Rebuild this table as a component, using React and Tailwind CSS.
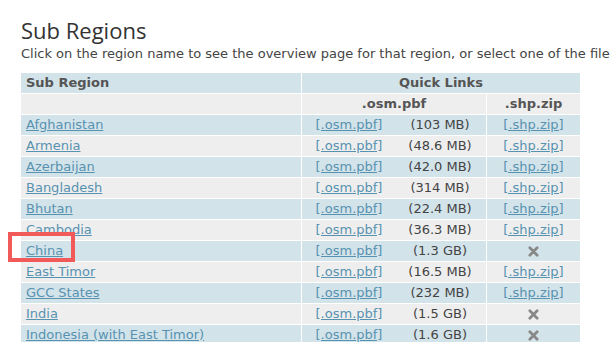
import React from "react";

const rows = [
	{ name: "Afghanistan", size: "(103 MB)", shp: true },
	{ name: "Armenia", size: "(48.6 MB)", shp: true },
	{ name: "Azerbaijan", size: "(42.0 MB)", shp: true },
	{ name: "Bangladesh", size: "(314 MB)", shp: true },
	{ name: "Bhutan", size: "(22.4 MB)", shp: true },
	{ name: "Cambodia", size: "(36.3 MB)", shp: true },
	{ name: "China", size: "(1.3 GB)", shp: false },
	{ name: "East Timor", size: "(16.5 MB)", shp: true },
	{ name: "GCC States", size: "(232 MB)", shp: true },
	{ name: "India", size: "(1.5 GB)", shp: false },
	{ name: "Indonesia (with East Timor)", size: "(1.6 GB)", shp: false },
];

function Cross() {
	return (
		<svg width="11" height="11" viewBox="0 0 12 12" className="inline-block">
			<path d="M2 2 L10 10 M10 2 L2 10" stroke="#888" strokeWidth="3" strokeLinecap="round" />
		</svg>
	);
}

export default function App() {
	return (
		<div className="relative w-[610px] h-[342px] overflow-hidden bg-white text-[#444] font-['DejaVu_Sans',Verdana,sans-serif]">
			<div className="pl-[20px] pt-[14px]">
				<h1 className="font-['Open_Sans',sans-serif] text-[22px] leading-[32px] text-[#333] pl-[1px]">Sub Regions</h1>
				<p className="text-[13px] leading-[16px] whitespace-nowrap pl-[1px]">
					Click on the region name to see the overview page for that region, or select one of the file extension links for quick access.
				</p>
				<table className="mt-[10px] border-separate border-spacing-[1px] text-[13px] leading-[20px] w-[561px]">
					<thead>
						<tr className="bg-[#d3e3ea] font-bold text-[#555]">
							<th className="w-[280px] h-[20px] p-0 pl-[5px] text-left">Sub Region</th>
							<th colSpan={2} className="h-[20px] p-0 text-center">Quick Links</th>
						</tr>
						<tr className="bg-[#eeeeee] font-bold text-[#555]">
							<th className="h-[20px] p-0"></th>
							<th className="w-[184px] h-[20px] p-0 text-center">.osm.pbf</th>
							<th className="w-[93px] h-[20px] p-0 text-center">.shp.zip</th>
						</tr>
					</thead>
					<tbody>
						{rows.map((r, i) => (
							<tr key={r.name} className={i % 2 === 0 ? "bg-[#d3e3ea]" : "bg-[#eeeeee]"}>
								<td className="h-[20px] p-0 pl-[5px]">
									<a href="#" className="text-[#5792b0] underline">{r.name}</a>
								</td>
								<td className="h-[20px] p-0">
									<div className="flex">
										<span className="w-[94px] text-center">
											<a href="#" className="text-[#5792b0] underline">[.osm.pbf]</a>
										</span>
										<span className="w-[88px] text-center">{r.size}</span>
									</div>
								</td>
								<td className="h-[20px] p-0 text-center">
									{r.shp ? (
										<a href="#" className="text-[#5792b0] underline">[.shp.zip]</a>
									) : (
										<Cross />
									)}
								</td>
							</tr>
						))}
					</tbody>
				</table>
			</div>
			<div className="absolute left-[8px] top-[232px] w-[67px] h-[30px] border-4 border-[#f25a5a]"></div>
		</div>
	);
}
